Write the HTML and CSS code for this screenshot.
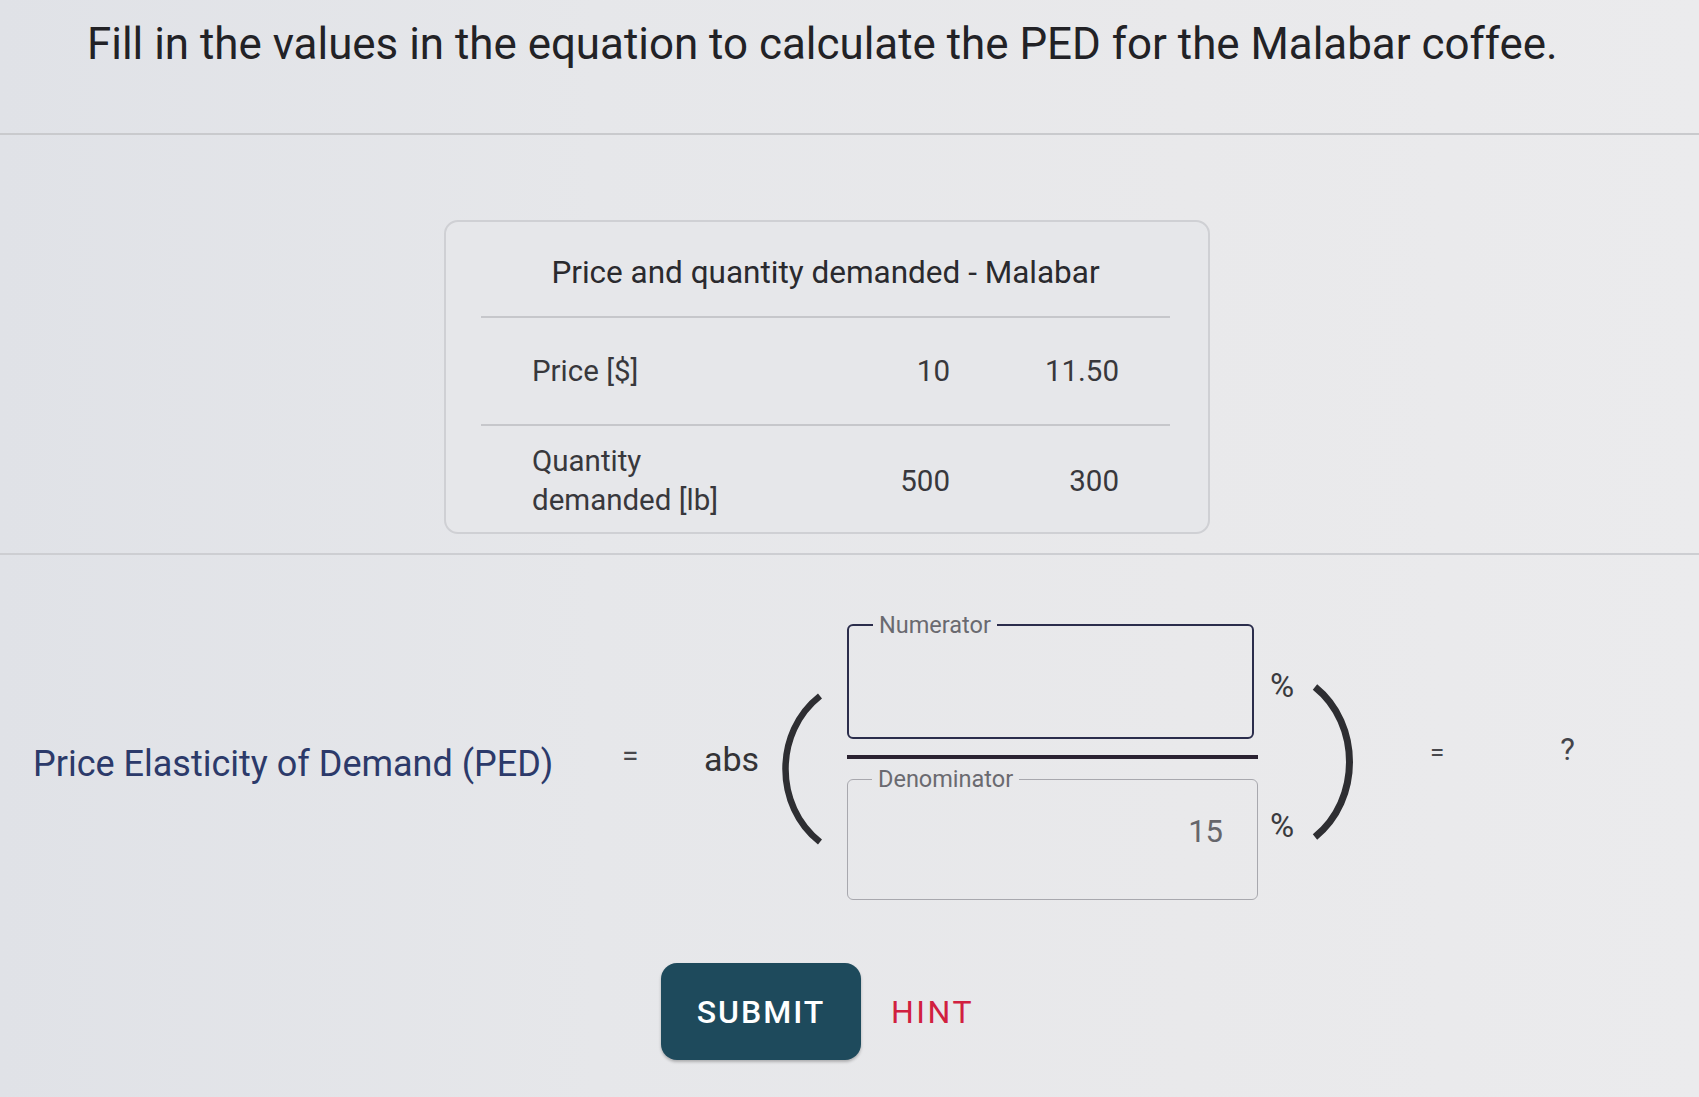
FILE: index.html
```html
<!DOCTYPE html>
<html lang="en">
<head>
<meta charset="utf-8">
<title>PED question</title>
<link rel="stylesheet" href="styles.css">
</head>
<body>
<header class="question">
  <h1 class="question-title">Fill in the values in the equation to calculate the PED for the Malabar coffee.</h1>
</header>

<section class="data">
  <div class="card">
    <div class="card-title">Price and quantity demanded - Malabar</div>
    <div class="row">
      <div class="cell label">Price [$]</div>
      <div class="cell num">10</div>
      <div class="cell num">11.50</div>
    </div>
    <div class="row last">
      <div class="cell label">Quantity<br>demanded [lb]</div>
      <div class="cell num">500</div>
      <div class="cell num">300</div>
    </div>
  </div>
</section>

<section class="equation">
  <div class="ped-label">Price Elasticity of Demand (PED)</div>
  <div class="eq-sign">=</div>
  <div class="abs">abs</div>
  <svg class="paren paren-l" width="44" height="154" viewBox="0 0 44 154">
    <path d="M40 4 C -6 40, -6 114, 40 150" fill="none" stroke="#2e2e32" stroke-width="6.5"/>
  </svg>
  <div class="fraction">
    <fieldset class="box box-num">
      <legend>Numerator</legend>
      <div class="box-value"></div>
    </fieldset>
    <div class="bar"></div>
    <fieldset class="box box-den">
      <legend>Denominator</legend>
      <div class="box-value">15</div>
    </fieldset>
  </div>
  <div class="percents">
    <span>%</span>
    <span>%</span>
  </div>
  <svg class="paren paren-r" width="44" height="158" viewBox="0 0 44 158">
    <path d="M4 4 C 50 41, 50 117, 4 154" fill="none" stroke="#2e2e32" stroke-width="7"/>
  </svg>
  <div class="eq-sign eq-right">=</div>
  <div class="result">?</div>
</section>

<section class="actions">
  <button class="submit" type="button">SUBMIT</button>
  <button class="hint" type="button">HINT</button>
</section>
</body>
</html>
```

FILE: styles.css
```css
* { box-sizing: border-box; }

html, body {
  margin: 0;
  height: 100%;
}

body {
  font-family: Roboto, "Liberation Sans", Arial, sans-serif;
  color: #2b2b2e;
  background: linear-gradient(90deg, #e0e2e7 0%, #e6e7ea 35%, #e9e9eb 70%, #ebebed 100%);
  overflow: hidden;
}

.question {
  height: 135px;
  padding: 18px 0 0 87px;
  border-bottom: 2px solid #c9cacd;
}

.question-title {
  margin: 0;
  font-size: 43.9px;
  line-height: 52px;
  font-weight: 400;
  color: #222226;
}

.data {
  padding: 85px 0 19px 444px;
  border-bottom: 2px solid #cdced2;
}

.card {
  width: 766px;
  height: 314px;
  border: 2px solid #cfd0d4;
  border-radius: 14px;
  padding: 0 38px 0 35px;
  background: #e6e7ea;
}

.card-title {
  height: 96px;
  padding-top: 31px;
  text-align: center;
  font-size: 31.5px;
  line-height: 40px;
  color: #2a2a2e;
  border-bottom: 2px solid #c6c7cb;
}

.row {
  display: grid;
  grid-template-columns: 1fr 120px 169px;
  align-items: center;
  height: 108px;
  padding: 0 51px;
  border-bottom: 2px solid #c6c7cb;
  font-size: 29.5px;
  line-height: 39px;
  color: #38383c;
}

.row.last {
  border-bottom: none;
  height: 110px;
}

.num { text-align: right; }

.equation {
  display: flex;
  align-items: center;
  padding: 0 0 0 33px;
  height: 401px;
}

.ped-label {
  width: 589px;
  font-size: 36px;
  line-height: 42px;
  color: #2c3a6a;
  padding-top: 16px;
}

.eq-sign {
  width: 82px;
  font-size: 30px;
  color: #48484c;
}

.abs {
  width: 76px;
  font-size: 34px;
  color: #333336;
  padding-top: 6px;
}

.paren { flex: none; display: block; }
.paren-l { margin-top: 27px; }
.paren-r { margin-top: 12px; margin-left: 9px; }

.fraction {
  width: 411px;
  margin-left: 23px;
  display: flex;
  flex-direction: column;
}

.box {
  margin: 0;
  min-width: 0;
  border-radius: 6px;
}

.box legend {
  padding: 0 6px;
  margin-left: -2px;
  font-size: 23.5px;
  line-height: 28px;
  color: #6a6a70;
}

.box-num {
  height: 128px;
  width: 407px;
  padding: 0 30px 0 26px;
  border: 2.5px solid #2b2d4c;
}

.bar {
  height: 4px;
  background: #2a2231;
  margin: 16px 0 6px;
}

.box-den {
  height: 135px;
  padding: 0 34px 0 26px;
  border: 1.5px solid #a8a8ae;
}

.box-value {
  text-align: right;
  font-size: 31px;
  line-height: 36px;
  color: #66666b;
  padding-top: 21px;
}

.percents {
  margin-left: 12px;
  width: 32px;
  height: 180px;
  display: flex;
  flex-direction: column;
  justify-content: space-between;
  font-size: 33px;
  line-height: 40px;
  color: #3a3a3e;
}

.eq-right {
  width: auto;
  margin-left: 75px;
  font-size: 26px;
  margin-top: -8px;
}

.result {
  margin-left: 116px;
  font-size: 31px;
  color: #44444a;
  margin-top: -12px;
}

.actions {
  display: flex;
  align-items: center;
  padding-left: 661px;
  margin-top: 7px;
}

.submit {
  width: 200px;
  height: 97px;
  border: none;
  border-radius: 16px;
  background: #1e4a5c;
  color: #ffffff;
  font-family: Roboto, "Liberation Sans", Arial, sans-serif;
  font-size: 32px;
  font-weight: 500;
  letter-spacing: 2px;
  box-shadow: 0 2px 3px rgba(0,0,0,0.25);
}

.hint {
  margin-left: 30px;
  border: none;
  background: none;
  padding: 0;
  color: #d1203f;
  font-family: Roboto, "Liberation Sans", Arial, sans-serif;
  font-size: 32px;
  font-weight: 400;
  letter-spacing: 2.5px;
}
```
